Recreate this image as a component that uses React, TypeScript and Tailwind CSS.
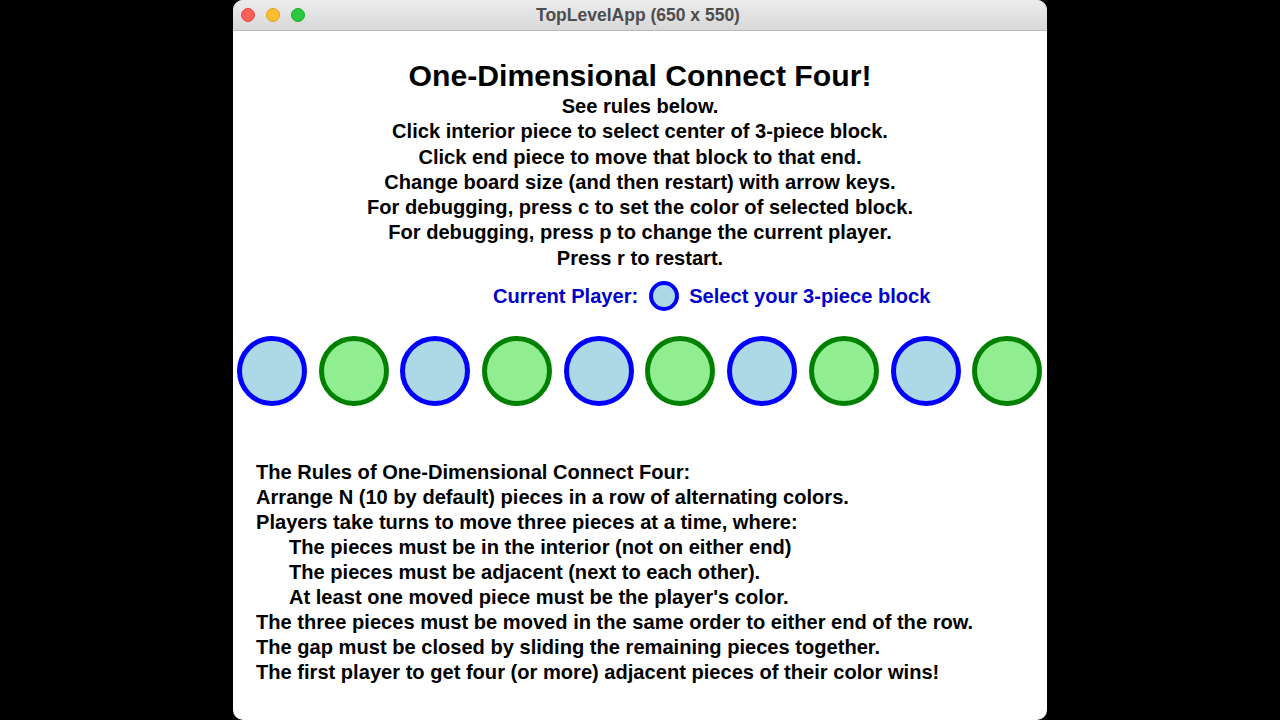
import React from "react";

const instructions = [
  "See rules below.",
  "Click interior piece to select center of 3-piece block.",
  "Click end piece to move that block to that end.",
  "Change board size (and then restart) with arrow keys.",
  "For debugging, press c to set the color of selected block.",
  "For debugging, press p to change the current player.",
  "Press r to restart.",
];

const rules: [string, boolean][] = [
  ["The Rules of One-Dimensional Connect Four:", false],
  ["Arrange N (10 by default) pieces in a row of alternating colors.", false],
  ["Players take turns to move three pieces at a time, where:", false],
  ["The pieces must be in the interior (not on either end)", true],
  ["The pieces must be adjacent (next to each other).", true],
  ["At least one moved piece must be the player's color.", true],
  ["The three pieces must be moved in the same order to either end of the row.", false],
  ["The gap must be closed by sliding the remaining pieces together.", false],
  ["The first player to get four (or more) adjacent pieces of their color wins!", false],
];

export default function App() {
  const pieces = Array.from({ length: 10 }, (_, i) => i % 2 === 0);
  return (
    <div className="w-[1280px] h-[720px] bg-black flex justify-center overflow-hidden">
      <div
        className="w-[814px] h-[720px] bg-white rounded-[10px] overflow-hidden flex flex-col"
        style={{ fontFamily: '"Liberation Sans", Arial, sans-serif' }}
      >
        <div className="h-[31px] shrink-0 bg-gradient-to-b from-[#ececec] to-[#d8d8d8] border-b border-[#b9b9b9] flex items-center relative">
          <div className="flex gap-[11px] pl-[8px] items-center">
            <div className="w-[14px] h-[14px] rounded-full bg-[#fe5f57] border border-[#e2463f]" />
            <div className="w-[14px] h-[14px] rounded-full bg-[#febc2e] border border-[#e1a116]" />
            <div className="w-[14px] h-[14px] rounded-full bg-[#28c840] border border-[#1aab29]" />
          </div>
          <div className="absolute inset-0 flex items-center justify-center pr-[4px] text-[17.5px] font-bold text-[#4d4d4d]">
            TopLevelApp (650 x 550)
          </div>
        </div>
        <div className="flex-1 text-black font-bold">
          <div className="pt-[28px] text-center text-[30.2px] leading-[34px]">
            One-Dimensional Connect Four!
          </div>
          <div className="mt-[1px] text-center text-[20.1px] leading-[25.3px]">
            {instructions.map((t) => (
              <div key={t}>{t}</div>
            ))}
          </div>
          <div className="mt-[9px] h-[32px] flex items-center pl-[260px] text-[20.1px] text-[#0000cc]">
            <span>Current Player:</span>
            <div className="ml-[11px] w-[30px] h-[30px] rounded-full bg-[#add8e6] border-[4px] border-[#0000ff]" />
            <span className="ml-[10px]">Select your 3-piece block</span>
          </div>
          <div className="mt-[24px] flex pl-[4px] gap-[11.7px]">
            {pieces.map((blue, i) => (
              <div
                key={i}
                className={
                  blue
                    ? "w-[70px] h-[70px] rounded-full bg-[#add8e6] border-[5px] border-[#0000ff]"
                    : "w-[70px] h-[70px] rounded-full bg-[#90ee90] border-[5px] border-[#008000]"
                }
              />
            ))}
          </div>
          <div className="mt-[54px] pl-[23px] text-[20.1px] leading-[25px]">
            {rules.map(([t, indent]) => (
              <div key={t} className={indent ? "pl-[33px]" : ""}>
                {t}
              </div>
            ))}
          </div>
        </div>
      </div>
    </div>
  );
}
